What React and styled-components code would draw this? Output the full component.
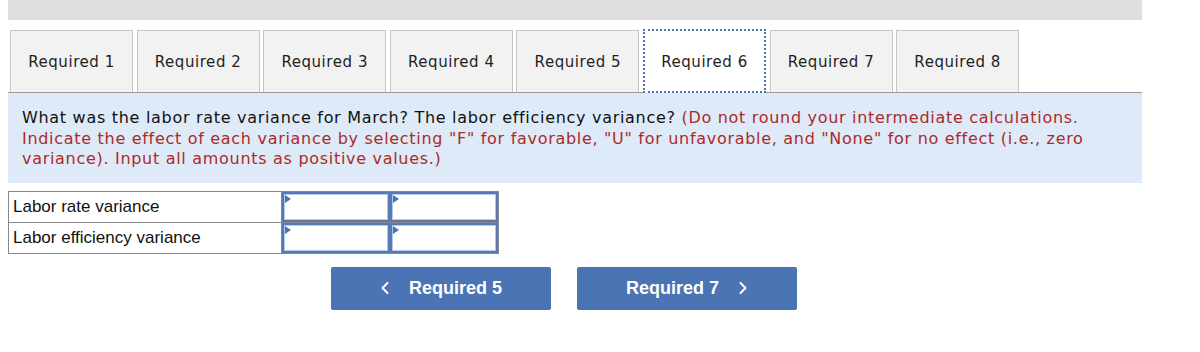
import React from 'react';
import styled, { createGlobalStyle, css } from 'styled-components';

const GlobalStyle = createGlobalStyle`
  body {
    margin: 0 8px;
    background: #ffffff;
    font-family: "DejaVu Sans", Verdana, sans-serif;
  }
`;

const Page = styled.div`
  width: 1134px;
`;

const TopBar = styled.div`
  height: 20px;
  background: #dfdfdf;
`;

const TabStrip = styled.div`
  display: flex;
  gap: 3.6px;
  margin-top: 10px;
  padding-left: 2px;
  border-bottom: 1px solid #9a9a9a;
  height: 62px;
`;

const Tab = styled.div`
  box-sizing: border-box;
  width: 123px;
  height: 62px;
  padding-top: 1px;
  display: flex;
  align-items: center;
  justify-content: center;
  background: #f2f2f2;
  border: 1px solid #c6c6c6;
  border-bottom: none;
  font-size: 15px;
  color: #1e1e1e;
  letter-spacing: 0.55px;

  ${p => p.$active && css`
    background: #ffffff;
    border: 2px dotted #4d74b8;
    height: 64px;
    margin-top: -1px;
    position: relative;
    z-index: 1;
  `}
`;

const Question = styled.div`
  background: #deeaf7;
  padding: 15px 50px 13px 14px;
  font-size: 16px;
  line-height: 20.6px;
  letter-spacing: 0.7px;
  color: #111;
`;

const Note = styled.span`
  color: #ab2a2a;
`;

const Table = styled.table`
  border-collapse: collapse;
  margin-top: 8px;
  font-family: "Liberation Sans", Arial, sans-serif;
  font-size: 17px;
`;

const LabelCell = styled.td`
  box-sizing: border-box;
  width: 273px;
  height: 30px;
  padding: 0 4px;
  border: 1px solid #888;
  color: #111;
`;

const InputCell = styled.td`
  padding: 0;
  border-top: 1px solid #888;
  border-bottom: 1px solid #888;
  &:last-child {
    border-right: 1px solid #888;
  }
`;

const Field = styled.div`
  position: relative;
  box-sizing: border-box;
  width: 108px;
  height: 30px;
  background: #fff;
  border: 2px solid #5679b5;
  box-shadow: inset 0 0 0 1px #b4c8e8;

  &::before {
    content: "";
    position: absolute;
    left: 1px;
    top: 1px;
    border-top: 4px solid transparent;
    border-bottom: 4px solid transparent;
    border-left: 6px solid #4a73b6;
  }
`;

const NavRow = styled.div`
  display: flex;
  gap: 26px;
  margin-top: 13px;
  padding-left: 323px;
`;

const NavButton = styled.button`
  box-sizing: border-box;
  width: 220px;
  height: 43px;
  display: flex;
  align-items: center;
  justify-content: center;
  gap: 19px;
  background: #4a74b3;
  border: none;
  border-radius: 2px;
  color: #fff;
  font-family: "Liberation Sans", Arial, sans-serif;
  font-weight: bold;
  font-size: 18px;
  padding: 0;
`;

const Chevron = ({ dir }) => (
  <svg width="10" height="14" viewBox="0 0 10 14">
    <polyline
      points={dir === 'left' ? '7.5,2 2.5,7 7.5,12' : '2.5,2 7.5,7 2.5,12'}
      fill="none"
      stroke="#fff"
      strokeWidth="2"
      strokeLinecap="round"
      strokeLinejoin="round"
    />
  </svg>
);

const tabs = [1, 2, 3, 4, 5, 6, 7, 8];
const rows = ['Labor rate variance', 'Labor efficiency variance'];

export default function App() {
  return (
    <Page>
      <GlobalStyle />
      <TopBar />
      <TabStrip>
        {tabs.map(n => (
          <Tab key={n} $active={n === 6}>Required {n}</Tab>
        ))}
      </TabStrip>
      <Question>
        What was the labor rate variance for March? The labor efficiency variance?{' '}
        <Note>
          (Do not round your intermediate calculations. Indicate the effect of each variance by
          selecting "F" for favorable, "U" for unfavorable, and "None" for no effect (i.e., zero
          variance). Input all amounts as positive values.)
        </Note>
      </Question>
      <Table>
        <tbody>
          {rows.map(r => (
            <tr key={r}>
              <LabelCell>{r}</LabelCell>
              <InputCell><Field /></InputCell>
              <InputCell><Field /></InputCell>
            </tr>
          ))}
        </tbody>
      </Table>
      <NavRow>
        <NavButton>
          <Chevron dir="left" />
          Required 5
        </NavButton>
        <NavButton>
          Required 7
          <Chevron dir="right" />
        </NavButton>
      </NavRow>
    </Page>
  );
}
